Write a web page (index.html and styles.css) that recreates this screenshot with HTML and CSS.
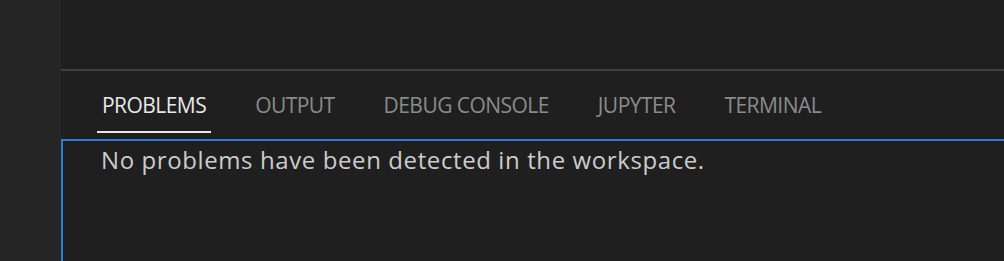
FILE: index.html
```html
<!DOCTYPE html>
<html lang="en">
<head>
<meta charset="utf-8">
<title>Panel</title>
<link rel="stylesheet" href="styles.css">
</head>
<body>
<div class="app">
  <div class="sidebar"></div>
  <div class="main">
    <div class="editor"></div>
    <div class="panel">
      <div class="tabs">
        <div class="tab active">PROBLEMS</div>
        <div class="tab">OUTPUT</div>
        <div class="tab">DEBUG CONSOLE</div>
        <div class="tab">JUPYTER</div>
        <div class="tab">TERMINAL</div>
      </div>
      <div class="content">
        <div class="message">No problems have been detected in the workspace.</div>
      </div>
    </div>
  </div>
</div>
</body>
</html>
```

FILE: styles.css
```css
html, body {
  margin: 0;
  padding: 0;
  height: 100%;
  overflow: hidden;
  background: #1f1f1f;
}

.app {
  display: flex;
  height: 261px;
  font-family: "Open Sans", "Noto Sans", sans-serif;
}

.sidebar {
  width: 61px;
  flex: none;
  background: #252526;
}

.main {
  flex: 1;
  display: flex;
  flex-direction: column;
  background: #1f1f1f;
  min-width: 0;
}

.editor {
  height: 69px;
  flex: none;
  border-bottom: 2px solid #3f3f3f;
}

.panel {
  flex: 1;
  display: flex;
  flex-direction: column;
}

.tabs {
  display: flex;
  gap: 39px;
  padding: 20px 0 0 36px;
  height: 48px;
}

.tab {
  font-size: 21px;
  line-height: 28px;
  letter-spacing: -0.55px;
  color: #8b8b8b;
  padding: 0 5px 12px 5px;
  height: 28px;
  border-bottom: 2px solid transparent;
  white-space: nowrap;
}

.tab.active {
  color: #e7e7e7;
  border-bottom-color: #e7e7e7;
}

.content {
  flex: 1;
  border-top: 2px solid #2b7bd5;
  border-left: 2px solid #2b7bd5;
  padding: 4px 0 0 38px;
}

.message {
  font-size: 24px;
  line-height: 30px;
  letter-spacing: 0.6px;
  color: #cccccc;
  white-space: nowrap;
}
```
